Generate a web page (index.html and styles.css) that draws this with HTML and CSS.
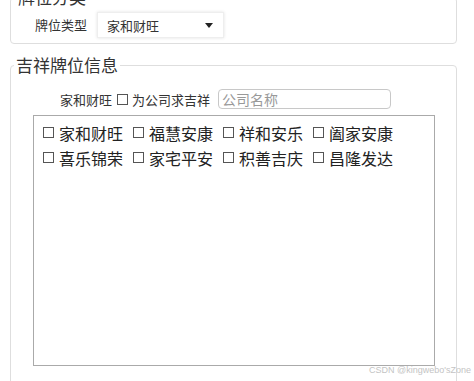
FILE: index.html
```html
<!DOCTYPE html>
<html lang="zh">
<head>
    <meta charset="UTF-8">
    <meta name="viewport" content="width=device-width, initial-scale=1.0">
    <title>吉祥牌位</title>
    <link rel="stylesheet" href="styles.css">
</head>
<body>
    <!-- 牌位分类 -->
    <fieldset class="group group-type">
        <legend>牌位分类</legend>
        <div class="type-row">
            <span class="type-label">牌位类型</span>
            <div class="select-box">
                <span>家和财旺</span>
                <span class="arrow"></span>
            </div>
        </div>
    </fieldset>

    <!-- 吉祥牌位信息 -->
    <fieldset class="group group-info">
        <legend>吉祥牌位信息</legend>
        <div class="info-row">
            <span class="info-label">家和财旺</span>
            <span class="check small"></span>
            <span class="check-text">为公司求吉祥</span>
            <div class="company-input">公司名称</div>
        </div>
        <div class="list-box">
            <div class="item"><span class="check"></span>家和财旺</div>
            <div class="item"><span class="check"></span>福慧安康</div>
            <div class="item"><span class="check"></span>祥和安乐</div>
            <div class="item"><span class="check"></span>阖家安康</div>
            <div class="item"><span class="check"></span>喜乐锦荣</div>
            <div class="item"><span class="check"></span>家宅平安</div>
            <div class="item"><span class="check"></span>积善吉庆</div>
            <div class="item"><span class="check"></span>昌隆发达</div>
        </div>
    </fieldset>

    <div class="watermark">CSDN @kingwebo'sZone</div>
</body>
</html>
```

FILE: styles.css
```css
* {
    box-sizing: border-box;
}

html, body {
    margin: 0;
    padding: 0;
    height: 381px;
    overflow: hidden;
}

body {
    position: relative;
    background: #fff;
    color: #333;
    font-family: "Microsoft YaHei", "Noto Sans CJK SC", "Noto Sans", sans-serif;
    padding: 0 0 0 10px;
}

.group {
    width: 447px;
    margin: 0;
    border: 1px solid #dedede;
    border-radius: 4px;
}

.group legend {
    font-size: 17px;
    line-height: 24px;
    padding: 0 2px;
    color: #333;
}

/* 牌位分类 */
.group-type {
    margin-top: -15px;
    padding: 3px 10px 5px 24px;
}

.group-type legend {
    margin-left: -19px;
}

.type-row {
    display: flex;
    align-items: center;
    gap: 10px;
}

.type-label {
    font-size: 13px;
    line-height: 26px;
    width: 52px;
    flex-shrink: 0;
    color: #333;
}

.select-box {
    width: 127px;
    height: 26px;
    display: flex;
    align-items: center;
    justify-content: space-between;
    padding: 0 10px 0 9px;
    font-size: 13px;
    color: #333;
    border: 1px solid #eee;
    box-shadow: 0 0 3px rgba(0,0,0,0.12);
    background: #fff;
}

.arrow {
    width: 0;
    height: 0;
    border-left: 4px solid transparent;
    border-right: 4px solid transparent;
    border-top: 5px solid #222;
}

/* 吉祥牌位信息 */
.group-info {
    margin-top: 9px;
    height: 340px;
    padding: 12px 21px 20px 22px;
}

.group-info legend {
    margin-left: -19px;
}

.info-row {
    display: flex;
    align-items: center;
    height: 20px;
    font-size: 13px;
}

.info-label {
    width: 79px;
    text-align: right;
    margin-right: 5px;
}

.check {
    display: inline-block;
    width: 11px;
    height: 11px;
    border: 1px solid #555;
    background: #fff;
}

.check.small {
    margin-right: 4px;
}

.check-text {
    margin-right: 8px;
}

.company-input {
    width: 173px;
    height: 20px;
    border: 1px solid #c8c8c8;
    border-radius: 4px;
    padding: 0 3px;
    font-size: 14px;
    line-height: 18px;
    color: #999;
}

.list-box {
    margin-top: 6px;
    width: 402px;
    height: 251px;
    border: 1px solid #aaa;
    padding: 5px 0 0 9px;
    display: grid;
    grid-template-columns: repeat(4, 90px);
    grid-auto-rows: 25px;
    align-content: start;
}

.item {
    display: flex;
    align-items: center;
    gap: 5px;
    font-size: 16px;
    line-height: 25px;
    color: #222;
}

.item .check {
    margin-top: -3px;
}

.watermark {
    position: absolute;
    right: 3px;
    bottom: 6px;
    font-family: "Liberation Sans", sans-serif;
    font-size: 9px;
    color: #c4c4c4;
}
```
